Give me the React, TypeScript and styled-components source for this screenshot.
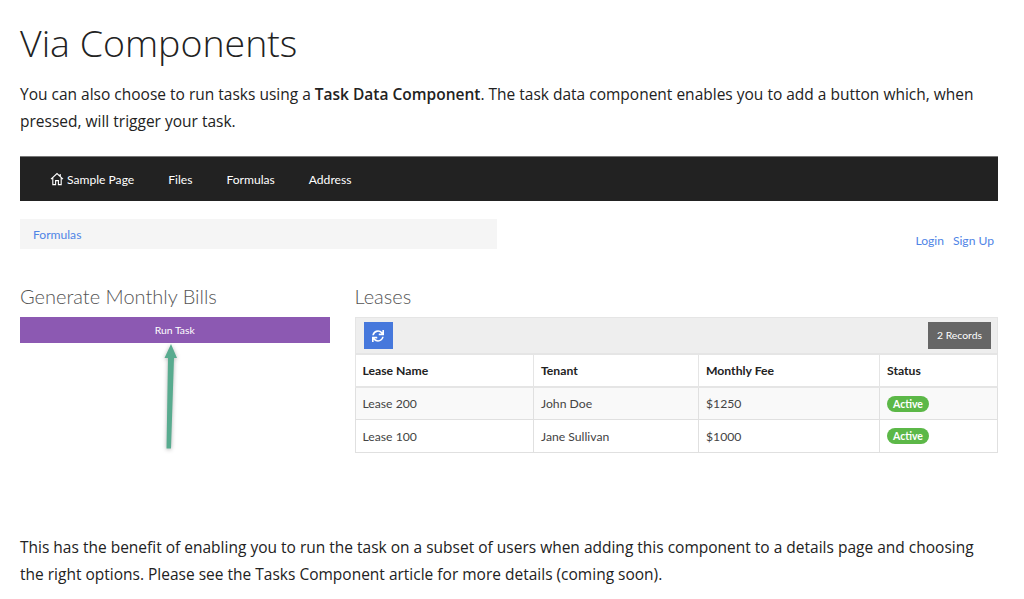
import React from 'react';
import styled, { createGlobalStyle } from 'styled-components';
import { FaSync } from 'react-icons/fa';

const Global = createGlobalStyle`
  html, body { margin: 0; padding: 0; background: #fff; overflow: hidden; }
  body { font-family: "Open Sans", sans-serif; }
`

const Page = styled.div`
  width: 1024px;
  height: 599px;
  box-sizing: border-box;
  padding: 0 26px 0 20px;
  overflow: hidden;
`

const Title = styled.h1`
  margin: 18px 0 0;
  height: 50px;
  font: 300 37.5px/50px "Open Sans", sans-serif;
  color: #222;
`

const Text = styled.p<{ $top: number }>`
  margin: ${p => p.$top}px 0 0;
  font: 400 15.5px/27px "Open Sans", sans-serif;
  color: #222;

  b {
    font-weight: 600;
  }
`

const Shot = styled.div`
  margin-top: 21px;
  height: 378px;
`

const Nav = styled.nav`
  height: 45px;
  background: #222;
  border-top: 1px solid #777;
  box-sizing: border-box;
  display: flex;
  align-items: center;
  padding-left: 30px;
  gap: 34px;
`

const NavItem = styled.a`
  display: flex;
  align-items: center;
  gap: 3px;
  color: #fff;
  font: 400 12.1px "Lato", sans-serif;
`

const Top = styled.div`
  display: flex;
  justify-content: space-between;
  align-items: flex-end;
  margin-top: 18px;
`

const Crumb = styled.div`
  width: 477px;
  height: 30px;
  box-sizing: border-box;
  padding-left: 13px;
  display: flex;
  align-items: center;
  background: #f5f5f5;
`

const Link = styled.a`
  color: #4f84e6;
  font: 400 12.1px "Lato", sans-serif;
`

const Auth = styled.div`
  display: flex;
  gap: 9px;
  padding-right: 4px;
  margin-bottom: 1px;
`

const Columns = styled.div`
  display: flex;
  gap: 25px;
  margin-top: 36px;
`

const Left = styled.section`
  width: 309.5px;
  position: relative;
`

const Right = styled.section`
  flex: 1;
`

const Heading = styled.h2`
  margin: 0 0 7px;
  height: 25px;
  font: 300 20px/23px "Lato", sans-serif;
  color: #555;
`

const RunButton = styled.button`
  display: block;
  width: 100%;
  height: 26px;
  border: 0;
  background: #8c59b2;
  color: #fff;
  font: 400 10.4px "Lato", sans-serif;
`

const Arrow = styled.svg`
  position: absolute;
  left: 140px;
  top: 57px;
  filter: drop-shadow(0 1px 2px rgba(0, 0, 0, 0.3));
`

const Toolbar = styled.div`
  height: 37px;
  box-sizing: border-box;
  display: flex;
  align-items: center;
  justify-content: space-between;
  padding: 0 6px 0 8px;
  background: #eee;
  border: 1px solid #e5e5e5;
`

const Refresh = styled.button`
  width: 29px;
  height: 27px;
  padding: 0;
  border: 0;
  background: #4678dc;
  color: #fff;
  display: flex;
  align-items: center;
  justify-content: center;
`

const Records = styled.div`
  width: 63px;
  height: 27px;
  background: #666;
  color: #fff;
  font: 400 10.4px/27px "Lato", sans-serif;
  text-align: center;
`

const Table = styled.table`
  width: 100%;
  border-collapse: collapse;
  table-layout: fixed;
  font: 400 12.2px "Lato", sans-serif;
  color: #444;
`

const Th = styled.th<{ $w?: number }>`
  width: ${p => (p.$w ? `${p.$w}px` : 'auto')};
  height: 32px;
  box-sizing: border-box;
  padding: 0 7px;
  text-align: left;
  font-weight: 700;
  color: #222;
  border: 1px solid #e5e5e5;
  border-bottom-width: 2px;
`

const Td = styled.td`
  height: 33px;
  box-sizing: border-box;
  padding: 0 7px;
  border: 1px solid #e0e0e0;
`

const Row = styled.tr<{ $odd?: boolean }>`
  background: ${p => (p.$odd ? '#f9f9f9' : '#fff')};
`

const Badge = styled.span`
  display: inline-block;
  padding: 0 6px;
  height: 16px;
  border-radius: 8px;
  background: #5cb848;
  color: #fff;
  font: 700 10.5px/16px "Lato", sans-serif;
  vertical-align: middle;
`

const rows = [
  { name: 'Lease 200', tenant: 'John Doe', fee: '$1250', odd: true },
  { name: 'Lease 100', tenant: 'Jane Sullivan', fee: '$1000', odd: false },
]

const HomeIcon = () => (
  <svg width="14" height="14" viewBox="0 0 14 14" fill="none" stroke="#fff" strokeWidth="1.1">
    <path d="M1 7.2 L7 1.6 L13 7.2 M2.8 5.8 V12.6 H5.6 V8.6 H8.4 V12.6 H11.2 V5.8 M10.2 2 V4.2" />
  </svg>
)

export default function App() {
  return (
    <Page>
      <Global />
      <Title>Via Components</Title>
      <Text $top={13}>
        You can also choose to run tasks using a <b>Task Data Component</b>. The task data component enables you to add a button which, when pressed, will trigger your task.
      </Text>
      <Shot>
        <Nav>
          <NavItem><HomeIcon />Sample Page</NavItem>
          <NavItem>Files</NavItem>
          <NavItem>Formulas</NavItem>
          <NavItem>Address</NavItem>
        </Nav>
        <Top>
          <Crumb><Link>Formulas</Link></Crumb>
          <Auth><Link>Login</Link><Link>Sign Up</Link></Auth>
        </Top>
        <Columns>
          <Left>
            <Heading>Generate Monthly Bills</Heading>
            <RunButton>Run Task</RunButton>
            <Arrow width="20" height="110" viewBox="0 0 20 110">
              <path d="M11 2 L17 16 L14 16 L11 106.5 L6.5 106.5 L8 16 L4.5 16 Z" fill="#58ab8f" />
            </Arrow>
          </Left>
          <Right>
            <Heading>Leases</Heading>
            <Toolbar>
              <Refresh><FaSync size={12} /></Refresh>
              <Records>2 Records</Records>
            </Toolbar>
            <Table>
              <thead>
                <tr>
                  <Th $w={178.5}>Lease Name</Th>
                  <Th $w={165}>Tenant</Th>
                  <Th $w={181}>Monthly Fee</Th>
                  <Th>Status</Th>
                </tr>
              </thead>
              <tbody>
                {rows.map(r => (
                  <Row key={r.name} $odd={r.odd}>
                    <Td>{r.name}</Td>
                    <Td>{r.tenant}</Td>
                    <Td>{r.fee}</Td>
                    <Td><Badge>Active</Badge></Td>
                  </Row>
                ))}
              </tbody>
            </Table>
          </Right>
        </Columns>
      </Shot>
      <Text $top={0}>
        This has the benefit of enabling you to run the task on a subset of users when adding this component to a details page and choosing the right options. Please see the Tasks Component article for more details (coming soon).
      </Text>
    </Page>
  )
}
